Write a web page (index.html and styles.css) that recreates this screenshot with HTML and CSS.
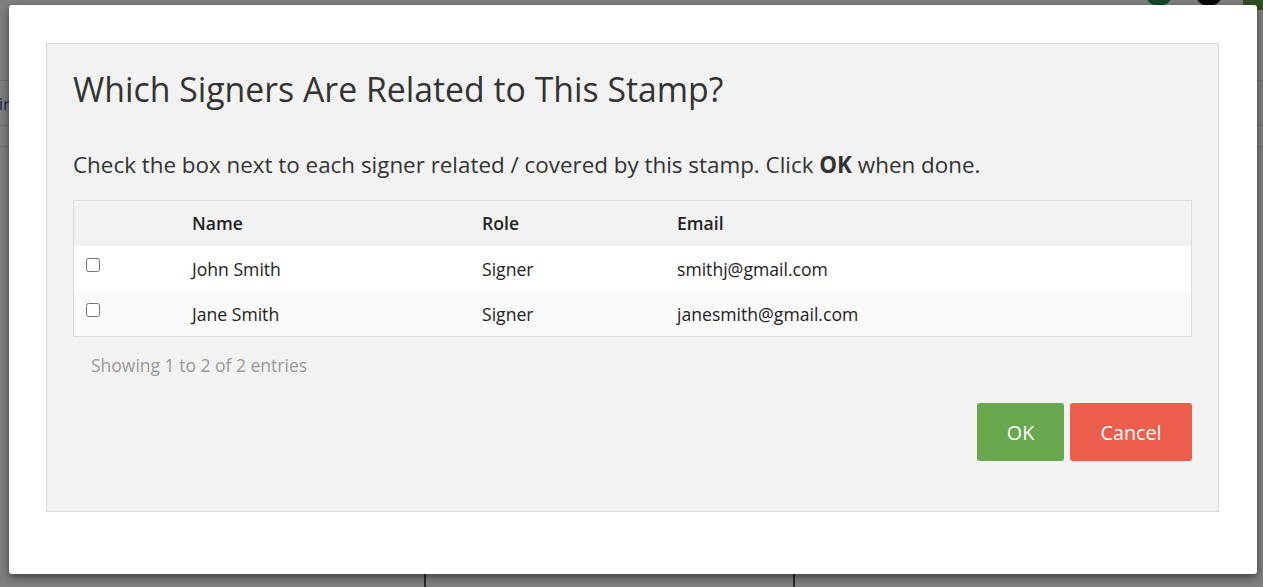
FILE: index.html
```html
<!DOCTYPE html>
<html lang="en">
<head>
  <meta charset="UTF-8">
  <meta name="viewport" content="width=device-width, initial-scale=1.0">
  <title>Which Signers Are Related to This Stamp?</title>
  <link rel="stylesheet" href="styles.css">
</head>
<body>
  <div class="pagina">
    <div class="barra-top">
      <span class="ico ico-verde"></span>
      <span class="ico ico-negro"></span>
      <span class="ico-bloque"></span>
    </div>
    <div class="menu">
      <span class="menu-link">Firmar</span>
    </div>
    <div class="sub-menu"></div>
    <div class="columnas">
      <div class="col col-a"></div>
      <div class="col col-b"></div>
      <div class="col col-c"></div>
    </div>
  </div>

  <div class="overlay">
    <div class="modal">
      <div class="panel">
        <h1>Which Signers Are Related to This Stamp?</h1>
        <p class="instruccion">Check the box next to each signer related / covered by this stamp. Click <b>OK</b> when done.</p>

        <table class="tabla">
          <thead>
            <tr>
              <th class="col-check"></th>
              <th class="col-nombre">Name</th>
              <th class="col-rol">Role</th>
              <th>Email</th>
            </tr>
          </thead>
          <tbody>
            <tr>
              <td class="col-check"><input type="checkbox"></td>
              <td>John Smith</td>
              <td>Signer</td>
              <td>smithj@gmail.com</td>
            </tr>
            <tr>
              <td class="col-check"><input type="checkbox"></td>
              <td>Jane Smith</td>
              <td>Signer</td>
              <td>janesmith@gmail.com</td>
            </tr>
          </tbody>
        </table>

        <div class="info">Showing 1 to 2 of 2 entries</div>

        <div class="acciones">
          <button class="btn btn-ok" type="button">OK</button>
          <button class="btn btn-cancelar" type="button">Cancel</button>
        </div>
      </div>
    </div>
  </div>
</body>
</html>
```

FILE: styles.css
```css
html, body {
  margin: 0;
  height: 100%;
  overflow: hidden;
}
body {
  font-family: 'Open Sans', 'Liberation Sans', sans-serif;
  background: #ffffff;
  color: #333;
  position: relative;
}

/* pagina de fondo (queda debajo del overlay) */
.pagina {
  height: 100%;
  overflow: hidden;
}
.barra-top {
  height: 80px;
  border-bottom: 1px solid #dcdcdc;
  display: flex;
  justify-content: flex-end;
  align-items: flex-start;
  gap: 22px;
}
.ico {
  width: 28px;
  height: 28px;
  border-radius: 50%;
  margin-top: -22px;
}
.ico-verde {
  background: #1a9a4a;
}
.ico-negro {
  background: #111;
  margin-right: -2px;
}
.ico-bloque {
  width: 20px;
  height: 10px;
  background: #5f9e3e;
}
.menu {
  height: 44px;
  border-bottom: 1px solid #dcdcdc;
  display: flex;
  align-items: center;
}
.menu-link {
  font-size: 17px;
  color: #1f4f9e;
  margin-left: -10px;
}
.sub-menu {
  height: 20px;
  border-bottom: 1px solid #dcdcdc;
}
.columnas {
  display: flex;
  height: 440px;
}
.col {
  border-right: 2px solid #555;
}
.col-a { width: 424px; }
.col-b { width: 367px; }
.col-c { flex: 1; border-right: none; }

/* overlay y modal */
.overlay {
  position: absolute;
  inset: 0;
  background: rgba(0, 0, 0, 0.5);
}
.modal {
  position: absolute;
  left: 9px;
  top: 5px;
  width: 1248px;
  height: 569px;
  background: #fff;
  border-radius: 3px;
  box-shadow: 0 3px 9px rgba(0, 0, 0, 0.5);
  padding: 38px 38px 0 37px;
  box-sizing: border-box;
}
.panel {
  height: 469px;
  box-sizing: border-box;
  background: #f2f2f2;
  border: 1px solid #d9d9d9;
  padding: 20px 26px 0 26px;
}
h1 {
  font-size: 33.8px;
  font-weight: 400;
  color: #333;
  margin: 0;
  line-height: 50px;
}
.instruccion {
  font-size: 22.4px;
  margin: 36px 0 0 0;
  line-height: 30px;
  color: #333;
}
.instruccion b {
  font-weight: 700;
}

.tabla {
  width: 100%;
  margin-top: 20px;
  border-collapse: collapse;
  border: 1px solid #dcdcdc;
  font-size: 17.6px;
  color: #222;
}
.tabla th {
  text-align: left;
  font-weight: 600;
  background: #f2f2f2;
  height: 43px;
  padding: 0 0 2px 0;
}
.tabla td {
  height: 45px;
  padding: 0;
}
.tabla tbody tr:nth-child(odd) {
  background: #fff;
}
.tabla tbody tr:nth-child(even) {
  background: #f9f9f9;
}
.col-check {
  width: 106px;
  padding-left: 12px !important;
}
.col-check input {
  margin: 0;
  width: 14px;
  height: 14px;
  vertical-align: 4px;
}
.col-nombre { width: 290px; }
.col-rol { width: 195px; }

.info {
  color: #999;
  font-size: 17.5px;
  padding: 16px 0 0 18px;
  line-height: 24px;
}

.acciones {
  display: flex;
  justify-content: flex-end;
  gap: 6px;
  margin-top: 26px;
}
.btn {
  font-family: inherit;
  font-size: 19.7px;
  color: #fff;
  border: none;
  border-radius: 3px;
  height: 58px;
  cursor: pointer;
}
.btn-ok {
  background: #6aa84f;
  width: 87px;
}
.btn-cancelar {
  background: #ec5e4c;
  width: 122px;
}
```
